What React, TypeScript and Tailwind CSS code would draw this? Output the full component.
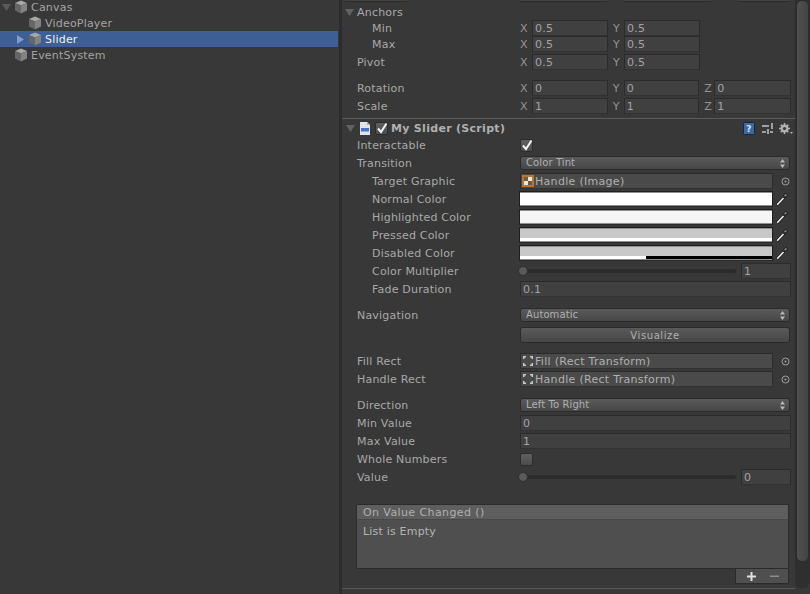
import React from "react";

const Cube = () => (
  <svg width="14" height="14" viewBox="0 0 14 14" className="shrink-0">
    <path d="M7 0.5 L13 3 L7 5.5 L1 3 Z" fill="#a8a8a8" />
    <path d="M1 3 L7 5.5 L7 13.5 L1 10.5 Z" fill="#666666" />
    <path d="M13 3 L7 5.5 L7 13.5 L13 10.5 Z" fill="#838383" />
  </svg>
);

const Tri = ({ color = "#626262", dir = "down" }: { color?: string; dir?: "down" | "right" }) => (
  <svg width="9" height="9" viewBox="0 0 9 9" className="shrink-0">
    {dir === "down" ? <path d="M0 1 H9 L4.5 8 Z" fill={color} /> : <path d="M1 0 L8 4.5 L1 9 Z" fill={color} />}
  </svg>
);

const Field = ({ children, className = "" }: { children?: React.ReactNode; className?: string }) => (
  <div className={"h-[16px] border border-[#2b2b2b] border-b-[#323232] bg-[#404040] pl-[2px] flex items-center text-[#a4a4a4] leading-none " + className}>
    {children}
  </div>
);

const Row = ({ label, indent, children, className = "" }: { label: string; indent?: boolean; children?: React.ReactNode; className?: string }) => (
  <div className={"flex items-center h-4 pr-[4px] " + className}>
    <div className={"w-[178px] shrink-0 text-[#a8a8a8] " + (indent ? "pl-[30px]" : "pl-[15px]")}>{label}</div>
    <div className="flex-1 flex items-center min-w-0">{children}</div>
  </div>
);

const Vec = ({ x, y, z }: { x: string; y?: string; z?: string }) => (
  <>
    <span className="w-[12px] text-[#949494]">X</span>
    <Field className="w-[76px]">{x}</Field>
    {y !== undefined && (
      <>
        <span className="w-[11px] ml-[5px] text-[#949494]">Y</span>
        <Field className="w-[76px]">{y}</Field>
      </>
    )}
    {z !== undefined && (
      <>
        <span className="w-[10px] ml-[5px] text-[#949494]">Z</span>
        <Field className="w-[77px]">{z}</Field>
      </>
    )}
  </>
);

const Dropdown = ({ text }: { text: string }) => (
  <div className="flex-1 mr-[1px] h-[14px] rounded-[3px] border border-[#2a2a2a] bg-gradient-to-b from-[#5a5a5a] to-[#474747] flex items-center justify-between pl-[5px] pr-[4px] text-[10px] text-[#b0b0b0] tracking-[0.1px]">
    <span>{text}</span>
    <svg width="5" height="9" viewBox="0 0 5 9">
      <path d="M2.5 0 L5 3.5 H0 Z M2.5 9 L0 5.5 H5 Z" fill="#b8b8b8" />
    </svg>
  </div>
);

const Dot = () => (
  <svg width="9" height="9" viewBox="0 0 9 9" className="ml-[8px] shrink-0">
    <circle cx="4.5" cy="4.5" r="3.5" fill="none" stroke="#a0a0a0" strokeWidth="1" />
    <circle cx="4.5" cy="4.5" r="1" fill="#a0a0a0" />
  </svg>
);

const Dropper = () => (
  <svg width="13" height="14" viewBox="0 0 13 14" className="ml-[3px] shrink-0">
    <path d="M1 13 L8 5.5" stroke="#1c1c1c" strokeWidth="3" />
    <path d="M1.2 12.8 L7.5 6" stroke="#f2f2f2" strokeWidth="1.6" />
    <path d="M7 3.5 L10 0.8 L12.2 3 L9.5 6 Z" fill="#1c1c1c" />
    <path d="M8 3.5 L10 1.8 L11 3 L9.2 4.8 Z" fill="#8a8a8a" />
  </svg>
);

const Color = ({ fill, strip, half }: { fill: string; strip?: boolean; half?: boolean }) => (
  <div className="flex items-center flex-1 ml-[-1px]">
    <div className="w-[254px] h-[16px] border border-[#1e1e1e] border-b-[#2b2b2b] pt-[1px] pb-[1px] bg-[#8e8e8e] flex flex-col">
      <div className="flex-1" style={{ background: fill }} />
      {strip && (
        <div className="h-[3px] flex">
          <div className="bg-white" style={{ width: half ? "50%" : "100%" }} />
          {half && <div className="bg-black flex-1" />}
        </div>
      )}
    </div>
    <Dropper />
  </div>
);

const Slider = ({ val }: { val: string }) => (
  <>
    <div className="relative w-[216px] h-[4px] rounded-full bg-[#2c2c2c] shrink-0">
      <div className="absolute left-[-2px] top-[-3px] w-[10px] h-[10px] rounded-full bg-[#5a5a5a] border border-[#2e2e2e]" />
    </div>
    <Field className="w-[50px] ml-[5px]">{val}</Field>
  </>
);

const ObjField = ({ icon, text }: { icon: React.ReactNode; text: string }) => (
  <>
    <div className="w-[253px] h-[16px] border border-[#2b2b2b] border-b-[#323232] bg-[#4a4a4a] flex items-center text-[#b0b0b0] tracking-[0.3px]">
      {icon}
      <span>{text}</span>
    </div>
    <Dot />
  </>
);

const ImgIcon = () => (
  <svg width="12" height="12" viewBox="0 0 12 12" className="shrink-0 mr-[1px] ml-[1px]">
    <rect width="12" height="12" fill="#b8772c" />
    <rect x="2" y="2" width="4" height="4" fill="#6e5a40" />
    <rect x="6" y="6" width="4" height="4" fill="#6e5a40" />
    <rect x="6" y="2" width="4" height="4" fill="#e8e8e8" />
    <rect x="2" y="6" width="4" height="4" fill="#e8e8e8" />
  </svg>
);

const RectIcon = () => (
  <svg width="12" height="12" viewBox="0 0 12 12" className="shrink-0 mr-[1px] ml-[1px]">
    <path d="M1 1 H4 V2.5 H2.5 V4 H1 Z M11 1 V4 H9.5 V2.5 H8 V1 Z M1 11 V8 H2.5 V9.5 H4 V11 Z M11 11 H8 V9.5 H9.5 V8 H11 Z" fill="#c8c8c8" />
  </svg>
);

const Check = ({ checked, className = "" }: { checked?: boolean; className?: string }) => (
  <div className={"w-[13px] h-[13px] rounded-[2px] border border-[#2c2c2c] bg-gradient-to-b from-[#606060] to-[#4c4c4c] relative shrink-0 " + className}>
    {checked && (
      <svg width="14" height="14" viewBox="0 0 14 14" className="absolute left-[-1px] top-[-2px]">
        <path d="M3 7.5 L6 11 L11.5 2.5" fill="none" stroke="#f2f2f2" strokeWidth="2" />
      </svg>
    )}
  </div>
);

export default function App() {
  return (
    <div className="w-[810px] h-[594px] overflow-hidden flex bg-[#383838] text-[11px] leading-none tracking-[0.2px]" style={{ fontFamily: '"DejaVu Sans", sans-serif' }}>
      <div className="w-[338px] shrink-0 mt-[-1px]">
        <div className="pl-[14px] relative">
          <span className="absolute left-[2px] top-[4px]"><Tri color="#5a5a5a" /></span>
          <div className="h-4 flex items-center text-[#a4a4a4]"><Cube /><span className="ml-[3px]">Canvas</span></div>
        </div>
        <div className="pl-[28px] h-4 flex items-center text-[#a4a4a4]"><Cube /><span className="ml-[3px]">VideoPlayer</span></div>
        <div className="pl-[28px] h-4 flex items-center relative bg-[#3e5f96] text-[#f0f0f0]">
          <span className="absolute left-[16px] top-[4px]"><Tri dir="right" color="#7f9ccb" /></span>
          <Cube /><span className="ml-[3px]">Slider</span>
        </div>
        <div className="pl-[14px] h-4 flex items-center text-[#a4a4a4]"><Cube /><span className="ml-[3px]">EventSystem</span></div>
      </div>
      <div className="w-[3px] bg-[#2c2c2c] ml-[1px] shrink-0" />
      <div className="flex-1 min-w-0">
        <div className="h-[4px] relative">
          <div className="absolute left-[3px] top-0 w-[62px] h-[2px] bg-[#424242] border-b border-[#2c2c2c]" />
          <div className="absolute left-[178px] top-0 w-[87px] h-[2px] bg-[#424242] border-b border-[#2c2c2c]" />
          <div className="absolute left-[281px] top-0 w-[88px] h-[2px] bg-[#424242] border-b border-[#2c2c2c]" />
          <div className="absolute left-[396px] top-0 w-[52px] h-[2px] bg-[#424242] border-b border-[#2c2c2c]" />
        </div>
        <div className="h-4 flex items-center pl-[3px] text-[#a8a8a8] gap-[3px]">
          <Tri /><span>Anchors</span>
        </div>
        <Row label="Min" indent><Vec x="0.5" y="0.5" /></Row>
        <Row label="Max" indent><Vec x="0.5" y="0.5" /></Row>
        <Row label="Pivot" className="mt-[2px]"><Vec x="0.5" y="0.5" /></Row>
        <Row label="Rotation" className="mt-[10px]"><Vec x="0" y="0" z="0" /></Row>
        <Row label="Scale" className="mt-[2px]"><Vec x="1" y="1" z="1" /></Row>
        <div className="h-[1px] bg-[#5a5a5a] mt-[4px]" />
        <div className="h-[18px] flex items-center pl-[4px] relative">
          <Tri />
          <svg width="10" height="13" viewBox="0 0 10 13" className="ml-[5px]">
            <path d="M0 0 H7 L10 3 V13 H0 Z" fill="#dfe4ea" />
            <path d="M7 0 V3 H10 Z" fill="#a8b0b8" />
            <rect x="1" y="6" width="8" height="3.5" fill="#4a72c0" />
          </svg>
          <Check checked className="ml-[5px]" />
          <span className="ml-[3px] font-bold text-[#b0b0b0] tracking-[0.3px]">My Slider (Script)</span>
          <div className="absolute right-[2px] top-[3px] flex items-center">
            <svg width="12" height="13" viewBox="0 0 12 13">
              <rect x="0.5" y="0.5" width="11" height="12" rx="1" fill="#3e6aa0" stroke="#17263d" />
              <text x="6" y="10" fontSize="9" fontWeight="bold" textAnchor="middle" fill="#d8e6f5" fontFamily="DejaVu Sans">?</text>
            </svg>
            <svg width="11" height="11" viewBox="0 0 11 11" className="ml-[7px]">
              <path d="M0 2 H7 V4 H0 Z M9 0 H11 V6 H9 Z M0 8 H4 V10 H0 Z M5 6 H7 V11 H5 Z M8 8 H11 V10 H8 Z" fill="#a0a0a0" />
            </svg>
            <svg width="14" height="12" viewBox="0 0 14 12" className="ml-[6px]">
              <circle cx="5.5" cy="5.5" r="2.8" fill="none" stroke="#b0b0b0" strokeWidth="2.4" />
              <path d="M5.5 0 V11 M0 5.5 H11 M1.7 1.7 L9.3 9.3 M9.3 1.7 L1.7 9.3" stroke="#b0b0b0" strokeWidth="1.5" />
              <circle cx="5.5" cy="5.5" r="1.6" fill="#383838" />
              <path d="M11 9 H14 L12.5 11 Z" fill="#b0b0b0" />
            </svg>
          </div>
        </div>
        <Row label="Interactable"><Check checked /></Row>
        <Row label="Transition" className="mt-[2px]"><Dropdown text="Color Tint" /></Row>
        <Row label="Target Graphic" indent className="mt-[2px]"><ObjField icon={<ImgIcon />} text="Handle (Image)" /></Row>
        <Row label="Normal Color" indent className="mt-[2px]"><Color fill="#ffffff" /></Row>
        <Row label="Highlighted Color" indent className="mt-[2px]"><Color fill="#f5f5f5" /></Row>
        <Row label="Pressed Color" indent className="mt-[2px]"><Color fill="#c8c8c8" strip /></Row>
        <Row label="Disabled Color" indent className="mt-[2px]"><Color fill="#c8c8c8" strip half /></Row>
        <Row label="Color Multiplier" indent className="mt-[2px]"><Slider val="1" /></Row>
        <Row label="Fade Duration" indent className="mt-[2px]"><Field className="flex-1">0.1</Field></Row>
        <Row label="Navigation" className="mt-[10px]"><Dropdown text="Automatic" /></Row>
        <Row label="" className="mt-[4px] h-[16px]">
          <div className="flex-1 mr-[1px] h-[16px] pt-[1px] rounded-[3px] border border-[#2a2a2a] bg-gradient-to-b from-[#5a5a5a] to-[#474747] flex items-center justify-center text-[10px] text-[#b0b0b0] tracking-[0.6px]">Visualize</div>
        </Row>
        <Row label="Fill Rect" className="mt-[10px]"><ObjField icon={<RectIcon />} text="Fill (Rect Transform)" /></Row>
        <Row label="Handle Rect" className="mt-[2px]"><ObjField icon={<RectIcon />} text="Handle (Rect Transform)" /></Row>
        <Row label="Direction" className="mt-[10px]"><Dropdown text="Left To Right" /></Row>
        <Row label="Min Value" className="mt-[2px]"><Field className="flex-1">0</Field></Row>
        <Row label="Max Value" className="mt-[2px]"><Field className="flex-1">1</Field></Row>
        <Row label="Whole Numbers" className="mt-[2px]"><Check /></Row>
        <Row label="Value" className="mt-[2px]"><Slider val="0" /></Row>
        <div className="ml-[14px] mr-[6px] mt-[19px]">
          <div className="h-[16px] rounded-t-[2px] border border-[#2b2b2b] border-b-[#484848] bg-[#5e5e5e] pl-[6px] flex items-center text-[#b0b0b0] tracking-[0.4px]">On Value Changed ()</div>
          <div className="h-[49px] rounded-b-[2px] border border-t-0 border-[#2b2b2b] bg-[#4f4f4f] pl-[6px] pt-[6px] text-[#b4b4b4]">List is Empty</div>
          <div className="ml-auto w-[54px] h-[15px] rounded-b-[2px] border border-t-0 border-[#2b2b2b] bg-[#4f4f4f] flex items-center justify-around pl-[4px] pr-[2px]">
            <svg width="9" height="9" viewBox="0 0 9 9"><path d="M3.5 0 H5.5 V3.5 H9 V5.5 H5.5 V9 H3.5 V5.5 H0 V3.5 H3.5 Z" fill="#e0e0e0" /></svg>
            <svg width="9" height="9" viewBox="0 0 9 9"><path d="M0 3.5 H9 V5 H0 Z" fill="#8e8e8e" /></svg>
          </div>
        </div>
        <div className="h-[1px] bg-[#5a5a5a] mt-[4px]" />
      </div>
      <div className="w-[15px] shrink-0 relative bg-[#2f2f2f] h-[588px] rounded-b-[6px]">
        <div className="absolute left-[1px] right-[1px] top-0 h-[562px] rounded-[6px] bg-gradient-to-r from-[#505050] to-[#444444] border border-[#2c2c2c]" />
      </div>
    </div>
  );
}
